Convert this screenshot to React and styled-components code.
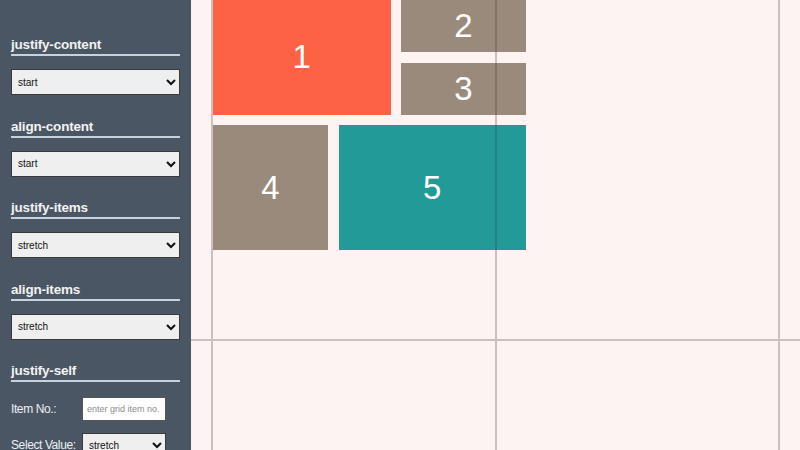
import React from 'react';
import styled, { createGlobalStyle } from 'styled-components';

const Global = createGlobalStyle`
  html, body {
    margin: 0;
    height: 100%;
    overflow: hidden;
  }
  body {
    font-family: "Liberation Sans", Arial, sans-serif;
  }
`;

const Page = styled.div`
  display: flex;
  height: 100vh;
`;

const Sidebar = styled.aside`
  flex: 0 0 191px;
  box-sizing: border-box;
  padding: 36px 11px 0;
  background: #4a5664;
  color: #f2f2f2;
  display: flex;
  flex-direction: column;
  gap: 22.5px;
`;

const Section = styled.section`
  display: flex;
  flex-direction: column;
`;

const Heading = styled.h3`
  margin: 0 0 ${p => p.$space || 13}px;
  font-size: 13.5px;
  letter-spacing: -0.2px;
  line-height: 18px;
  font-weight: bold;
  border-bottom: 2px solid #c7d2dc;
`;

const Select = styled.select`
  box-sizing: border-box;
  width: ${p => p.$w || '100%'};
  height: ${p => p.$h || 26}px;
  padding: 0 2px;
  font-family: "Liberation Sans", Arial, sans-serif;
  font-size: 10px;
  color: #111;
  background: #efefef;
  border: 1px solid #3a3a3a;
  border-radius: 0;
`;

const FieldGrid = styled.div`
  display: grid;
  grid-template-columns: 71px 84px;
  row-gap: 12px;
  align-items: center;
`;

const Label = styled.label`
  font-size: 12px;
  letter-spacing: -0.4px;
  white-space: nowrap;
  color: #eef0f2;
`;

const Input = styled.input`
  box-sizing: border-box;
  width: 84px;
  height: 24px;
  padding: 0 4px;
  font-family: "Liberation Sans", Arial, sans-serif;
  font-size: 9px;
  background: #fff;
  border: 1px solid #555;
  border-radius: 0;
  &::placeholder {
    color: #8a8a8a;
  }
`;

const Main = styled.main`
  position: relative;
  flex: 1;
  background: #fdf3f2;
  padding: 0 22px;
  overflow: hidden;
`;

const ItemGrid = styled.div`
  display: grid;
  grid-template-columns: 115px 52px 125px;
  grid-template-rows: 52px 52px 125px;
  gap: 10.5px;
  justify-content: start;
  align-content: start;
`;

const Item = styled.div`
  grid-column: ${p => p.$col};
  grid-row: ${p => p.$row};
  background: ${p => p.$bg};
  color: #fff;
  font-size: 33px;
  display: flex;
  align-items: center;
  justify-content: center;
`;

const Overlay = styled.div`
  position: absolute;
  inset: 0;
  pointer-events: none;
  display: grid;
  grid-template-columns: 22px 1fr 1fr 20px;
  grid-template-rows: 341px 1fr;
`;

const Cell = styled.div`
  border-right: ${p => (p.$last ? 'none' : '2px solid rgba(70, 60, 60, 0.28)')};
  border-bottom: ${p => (p.$bottom ? '2px solid rgba(70, 60, 60, 0.28)' : 'none')};
`;

const items = [
  { n: 1, col: '1 / 3', row: '1 / 3', bg: '#fd6245' },
  { n: 2, col: '3', row: '1', bg: '#9a8a7b' },
  { n: 3, col: '3', row: '2', bg: '#9a8a7b' },
  { n: 4, col: '1', row: '3', bg: '#9a8a7b' },
  { n: 5, col: '2 / 4', row: '3', bg: '#229a98' },
];

const sections = [
  { title: 'justify-content', value: 'start', options: ['start', 'end', 'center', 'stretch', 'space-between', 'space-around', 'space-evenly'] },
  { title: 'align-content', value: 'start', options: ['start', 'end', 'center', 'stretch', 'space-between', 'space-around', 'space-evenly'] },
  { title: 'justify-items', value: 'stretch', options: ['stretch', 'start', 'end', 'center'] },
  { title: 'align-items', value: 'stretch', options: ['stretch', 'start', 'end', 'center'] },
];

export default function App() {
  return (
    <Page>
      <Global />
      <Sidebar>
        {sections.map(s => (
          <Section key={s.title}>
            <Heading>{s.title}</Heading>
            <Select defaultValue={s.value}>
              {s.options.map(o => (
                <option key={o}>{o}</option>
              ))}
            </Select>
          </Section>
        ))}
        <Section>
          <Heading $space={15}>justify-self</Heading>
          <FieldGrid>
            <Label>Item No.:</Label>
            <Input placeholder="enter grid item no." />
            <Label>Select Value:</Label>
            <Select $w="84px" $h={24} defaultValue="stretch">
              <option>stretch</option>
              <option>start</option>
              <option>end</option>
              <option>center</option>
            </Select>
          </FieldGrid>
        </Section>
      </Sidebar>
      <Main>
        <ItemGrid>
          {items.map(it => (
            <Item key={it.n} $col={it.col} $row={it.row} $bg={it.bg}>
              {it.n}
            </Item>
          ))}
        </ItemGrid>
        <Overlay>
          <Cell $bottom />
          <Cell $bottom />
          <Cell $bottom />
          <Cell $bottom $last />
          <Cell />
          <Cell />
          <Cell />
          <Cell $last />
        </Overlay>
      </Main>
    </Page>
  );
}
